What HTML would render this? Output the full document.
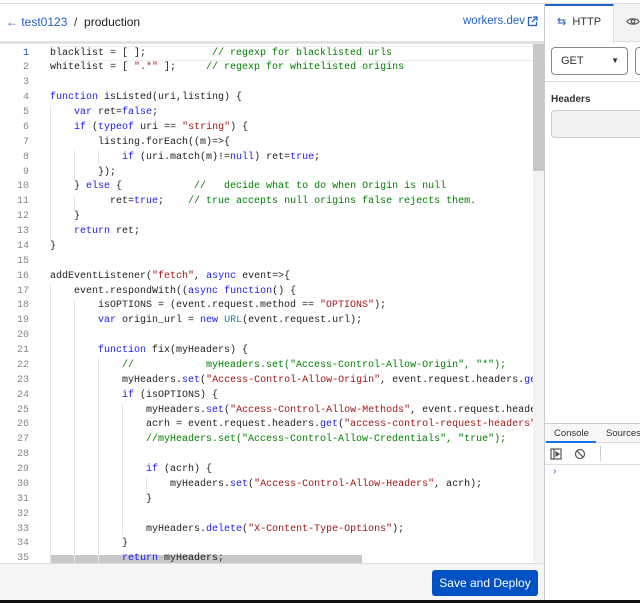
<!DOCTYPE html>
<html><head><meta charset="utf-8"><style>
*{margin:0;padding:0;box-sizing:border-box}
body{width:640px;height:603px;overflow:hidden;background:#fff;font-family:"Liberation Sans",sans-serif;position:relative}
.a{position:absolute}
.code{position:absolute;left:0;top:45px;width:533px;height:518px;overflow:hidden;font-family:"Liberation Mono",monospace;font-size:10px;}
.ln{height:14.88px;line-height:14.88px;white-space:pre;position:relative;top:1.5px}
.ln b{font-weight:normal;position:absolute;left:0;width:29px;text-align:right;color:#888}
.ln span.t{position:absolute;left:50px;color:#222}
.k{color:#1a1aff}.s{color:#a31515}.c{color:#008000}.f{color:#267f99}
.g{position:absolute;width:1px;background:#e4e4e4}
</style></head><body>
<div class="a" style="left:0;top:3px;width:640px;height:1px;background:#ddd"></div>
<div class="a" style="left:6px;top:15px;font-size:12px;color:#333"><span style="color:#2262c6">← test0123</span> &nbsp;/&nbsp; <span style="color:#222">production</span></div>
<div class="a" style="left:463px;top:15px;font-size:11.5px;color:#2262c6">workers.dev</div>
<svg class="a" style="left:527px;top:16px" width="11" height="11" viewBox="0 0 11 11" fill="none" stroke="#2262c6" stroke-width="1.3"><path d="M5 1.5H1.5v8h8V6"/><path d="M6 1h4v4M10 1L5 6"/></svg>
<div class="a" style="left:0;top:41px;width:544px;height:3px;background:#e2e2e2"></div>
<div class="a" style="left:50px;top:46px;width:483px;height:15px;border-top:1px solid #eee;border-bottom:1px solid #eee"></div>
<div class="a" style="left:50px;top:555px;width:312px;height:8px;background:#c8c8c8"></div>
<div class="g" style="left:50px;top:106px;height:134px"></div>
<div class="g" style="left:74px;top:150px;height:30px"></div>
<div class="g" style="left:74px;top:195px;height:15px"></div>
<div class="g" style="left:98px;top:150px;height:15px"></div>
<div class="g" style="left:50px;top:284px;height:280px"></div>
<div class="g" style="left:74px;top:299px;height:265px"></div>
<div class="g" style="left:98px;top:358px;height:206px"></div>
<div class="g" style="left:122px;top:403px;height:132px"></div>
<div class="g" style="left:146px;top:477px;height:15px"></div>
<div class="code">
<div class="ln"><b style="color:#1a50c8">1</b><span class="t">blacklist = [ ];           <span class="c">// regexp for blacklisted urls</span></span></div>
<div class="ln"><b>2</b><span class="t">whitelist = [ <span class="s">".*"</span> ];     <span class="c">// regexp for whitelisted origins</span></span></div>
<div class="ln"><b>3</b><span class="t"></span></div>
<div class="ln"><b>4</b><span class="t"><span class="k">function</span> isListed(uri,listing) {</span></div>
<div class="ln"><b>5</b><span class="t">    <span class="k">var</span> ret=<span class="k">false</span>;</span></div>
<div class="ln"><b>6</b><span class="t">    <span class="k">if</span> (<span class="k">typeof</span> uri == <span class="s">"string"</span>) {</span></div>
<div class="ln"><b>7</b><span class="t">        listing.forEach((m)=>{</span></div>
<div class="ln"><b>8</b><span class="t">            <span class="k">if</span> (uri.match(m)!=<span class="k">null</span>) ret=<span class="k">true</span>;</span></div>
<div class="ln"><b>9</b><span class="t">        });</span></div>
<div class="ln"><b>10</b><span class="t">    } <span class="k">else</span> {            <span class="c">//   decide what to do when Origin is null</span></span></div>
<div class="ln"><b>11</b><span class="t">          ret=<span class="k">true</span>;    <span class="c">// true accepts null origins false rejects them.</span></span></div>
<div class="ln"><b>12</b><span class="t">    }</span></div>
<div class="ln"><b>13</b><span class="t">    <span class="k">return</span> ret;</span></div>
<div class="ln"><b>14</b><span class="t">}</span></div>
<div class="ln"><b>15</b><span class="t"></span></div>
<div class="ln"><b>16</b><span class="t">addEventListener(<span class="s">"fetch"</span>, <span class="k">async</span> event=>{</span></div>
<div class="ln"><b>17</b><span class="t">    event.respondWith((<span class="k">async</span> <span class="k">function</span>() {</span></div>
<div class="ln"><b>18</b><span class="t">        isOPTIONS = (event.request.method == <span class="s">"OPTIONS"</span>);</span></div>
<div class="ln"><b>19</b><span class="t">        <span class="k">var</span> origin_url = <span class="k">new</span> <span class="f">URL</span>(event.request.url);</span></div>
<div class="ln"><b>20</b><span class="t"></span></div>
<div class="ln"><b>21</b><span class="t">        <span class="k">function</span> fix(myHeaders) {</span></div>
<div class="ln"><b>22</b><span class="t">            <span class="c">//            myHeaders.set("Access-Control-Allow-Origin", "*");</span></span></div>
<div class="ln"><b>23</b><span class="t">            myHeaders.<span class="k">set</span>(<span class="s">"Access-Control-Allow-Origin"</span>, event.request.headers.<span class="k">get</span></span></div>
<div class="ln"><b>24</b><span class="t">            <span class="k">if</span> (isOPTIONS) {</span></div>
<div class="ln"><b>25</b><span class="t">                myHeaders.<span class="k">set</span>(<span class="s">"Access-Control-Allow-Methods"</span>, event.request.headers</span></div>
<div class="ln"><b>26</b><span class="t">                acrh = event.request.headers.<span class="k">get</span>(<span class="s">"access-control-request-headers"</span>)</span></div>
<div class="ln"><b>27</b><span class="t">                <span class="c">//myHeaders.set("Access-Control-Allow-Credentials", "true");</span></span></div>
<div class="ln"><b>28</b><span class="t"></span></div>
<div class="ln"><b>29</b><span class="t">                <span class="k">if</span> (acrh) {</span></div>
<div class="ln"><b>30</b><span class="t">                    myHeaders.<span class="k">set</span>(<span class="s">"Access-Control-Allow-Headers"</span>, acrh);</span></div>
<div class="ln"><b>31</b><span class="t">                }</span></div>
<div class="ln"><b>32</b><span class="t"></span></div>
<div class="ln"><b>33</b><span class="t">                myHeaders.<span class="k">delete</span>(<span class="s">"X-Content-Type-Options"</span>);</span></div>
<div class="ln"><b>34</b><span class="t">            }</span></div>
<div class="ln"><b>35</b><span class="t">            <span class="k">return</span> myHeaders;</span></div>
</div>
<div class="a" style="left:533px;top:44px;width:11px;height:519px;background:#f3f3f3"></div>
<div class="a" style="left:533px;top:44px;width:11px;height:127px;background:#c8c8c8"></div>
<div class="a" style="left:0;top:563px;width:544px;height:37px;background:#f5f5f5;border-top:1px solid #ddd"></div>
<div class="a" style="left:432px;top:570px;width:106px;height:26px;background:#0051c3;border-radius:3px;color:#fff;font-size:12px;line-height:26px;text-align:center">Save and Deploy</div>
<div class="a" style="left:0;top:600px;width:640px;height:3px;background:#111"></div>
<div class="a" style="left:544px;top:4px;width:96px;height:596px;border-left:1px solid #ccc;background:#fff"></div>
<div class="a" style="left:545px;top:4px;width:95px;height:38px;background:#f3f3f3;border-bottom:1px solid #ddd"></div>
<div class="a" style="left:545px;top:4px;width:69px;height:39px;background:#fff;border-top:2px solid #2262c6;border-right:1px solid #ddd"></div>
<div class="a" style="left:557px;top:15px;font-size:11px;color:#333"><span style="color:#2262c6">⇆</span>&nbsp; HTTP</div>
<svg class="a" style="left:626px;top:17px" width="14" height="9" viewBox="0 0 14 9" fill="none" stroke="#555" stroke-width="1.2"><path d="M1 4.5C3 1 11 1 13 4.5C11 8 3 8 1 4.5Z"/><circle cx="7" cy="4.5" r="1.8"/></svg>
<div class="a" style="left:551px;top:47px;width:77px;height:28px;border:1px solid #888;border-radius:4px;font-size:11px;line-height:26px;padding-left:9px;color:#333">GET<span style="position:absolute;right:8px;top:0;font-size:8px">▼</span></div>
<div class="a" style="left:635px;top:47px;width:10px;height:28px;border:1px solid #888;border-radius:4px"></div>
<div class="a" style="left:545px;top:81px;width:95px;height:1px;background:#ddd"></div>
<div class="a" style="left:551px;top:94px;font-size:10px;font-weight:bold;color:#333">Headers</div>
<div class="a" style="left:551px;top:110px;width:95px;height:28px;border:1px solid #ccc;border-radius:4px;background:#f2f2f2"></div>
<div class="a" style="left:545px;top:423px;width:95px;height:20px;border-top:1px solid #ccc;border-bottom:1px solid #ddd;background:#f7f7f7"></div>
<div class="a" style="left:554px;top:428px;font-size:9.5px;color:#333">Console</div>
<div class="a" style="left:546px;top:441px;width:50px;height:2px;background:#1a73e8"></div>
<div class="a" style="left:606px;top:428px;font-size:9.5px;color:#333">Sources</div>
<svg class="a" style="left:550px;top:448px" width="40" height="12" viewBox="0 0 40 12" fill="none" stroke="#555" stroke-width="1.2"><rect x="1" y="1" width="10" height="10"/><path d="M4 1v10"/><path d="M6 4l3 2-3 2z" fill="#555"/><circle cx="30" cy="6" r="4.5"/><path d="M27 3l6 6"/></svg>
<div class="a" style="left:600px;top:446px;width:1px;height:15px;background:#ccc"></div>
<div class="a" style="left:545px;top:464px;width:95px;height:1px;background:#ddd"></div>
<div class="a" style="left:553px;top:466px;font-size:10px;color:#1a73e8">›</div>
</body></html>
